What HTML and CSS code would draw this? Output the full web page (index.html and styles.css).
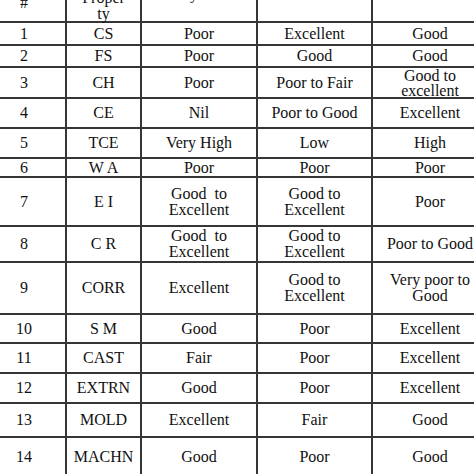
FILE: index.html
```html
<!DOCTYPE html>
<html>
<head>
<meta charset="utf-8">
<link rel="stylesheet" href="styles.css">
</head>
<body>
<div class="grid">
  <div class="cell hn">#</div>
  <div class="cell">Proper<br>ty</div>
  <div class="cell hx">Polymers</div>
  <div class="cell hx">Ceramics</div>
  <div class="cell hx">Metals</div>

  <div class="cell">1</div><div class="cell">CS</div><div class="cell">Poor</div><div class="cell">Excellent</div><div class="cell">Good</div>
  <div class="cell">2</div><div class="cell">FS</div><div class="cell">Poor</div><div class="cell">Good</div><div class="cell">Good</div>
  <div class="cell">3</div><div class="cell">CH</div><div class="cell">Poor</div><div class="cell">Poor to Fair</div><div class="cell tight">Good to<br>excellent</div>
  <div class="cell">4</div><div class="cell">CE</div><div class="cell">Nil</div><div class="cell">Poor to Good</div><div class="cell">Excellent</div>
  <div class="cell">5</div><div class="cell">TCE</div><div class="cell">Very High</div><div class="cell">Low</div><div class="cell">High</div>
  <div class="cell">6</div><div class="cell">W A</div><div class="cell">Poor</div><div class="cell">Poor</div><div class="cell">Poor</div>
  <div class="cell">7</div><div class="cell">E I</div><div class="cell">Good&nbsp; to<br>Excellent</div><div class="cell">Good to<br>Excellent</div><div class="cell">Poor</div>
  <div class="cell">8</div><div class="cell">C R</div><div class="cell">Good&nbsp; to<br>Excellent</div><div class="cell">Good to<br>Excellent</div><div class="cell">Poor to Good</div>
  <div class="cell">9</div><div class="cell">CORR</div><div class="cell">Excellent</div><div class="cell">Good to<br>Excellent</div><div class="cell">Very poor to<br>Good</div>
  <div class="cell">10</div><div class="cell">S M</div><div class="cell">Good</div><div class="cell">Poor</div><div class="cell">Excellent</div>
  <div class="cell">11</div><div class="cell">CAST</div><div class="cell">Fair</div><div class="cell">Poor</div><div class="cell">Excellent</div>
  <div class="cell">12</div><div class="cell">EXTRN</div><div class="cell">Good</div><div class="cell">Poor</div><div class="cell">Excellent</div>
  <div class="cell">13</div><div class="cell">MOLD</div><div class="cell">Excellent</div><div class="cell">Fair</div><div class="cell">Good</div>
  <div class="cell">14</div><div class="cell">MACHN</div><div class="cell">Good</div><div class="cell">Poor</div><div class="cell">Good</div>
</div>
</body>
</html>
```
FILE: styles.css
```css
html, body {
  margin: 0;
  padding: 0;
  background: #ffffff;
  overflow: hidden;
  width: 474px;
  height: 474px;
}
.grid {
  display: grid;
  grid-template-columns: 82px 73px 114px 113px 114px;
  grid-template-rows: 30px 21px 20px 29px 28px 28px 17px 47px 34px 50px 27px 28px 28px 32px 38px;
  gap: 2px;
  padding: 2px;
  width: max-content;
  margin-left: -19px;
  margin-top: -11px;
  background: #363636;
  font-family: "Liberation Serif", "Times New Roman", serif;
  font-size: 16px;
  line-height: 16px;
  color: #111111;
}
.cell {
  background: #ffffff;
  display: flex;
  align-items: center;
  justify-content: center;
  text-align: center;
  white-space: nowrap;
  overflow: visible;
}
.hn { padding-bottom: 6px; }
.hx {
  align-items: flex-start;
  line-height: 2px;
  padding-top: 2px;
}
.tight { line-height: 15px; }
```
